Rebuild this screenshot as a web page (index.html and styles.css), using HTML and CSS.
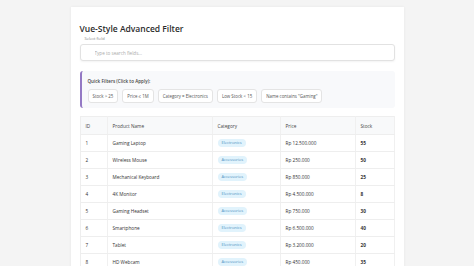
FILE: index.html
```html
<!DOCTYPE html>
<html lang="en">
<head>
<meta charset="UTF-8">
<meta name="viewport" content="width=device-width, initial-scale=1.0">
<title>Vue-Style Advanced Filter</title>
<link rel="stylesheet" href="styles.css">
</head>
<body>
<div class="card">
  <h1>Vue-Style Advanced Filter</h1>
  <label class="field-label">Select field</label>
  <div class="search-box">
    <input type="text" placeholder="Type to search fields...">
  </div>

  <div class="quick-filters">
    <div class="quick-title">Quick Filters (Click to Apply):</div>
    <div class="quick-buttons">
      <button class="chip">Stock &gt; 25</button>
      <button class="chip">Price ≤ 1M</button>
      <button class="chip">Category = Electronics</button>
      <button class="chip">Low Stock &lt; 15</button>
      <button class="chip">Name contains "Gaming"</button>
    </div>
  </div>

  <table class="products">
    <thead>
      <tr>
        <th class="col-id">ID</th>
        <th class="col-name">Product Name</th>
        <th class="col-cat">Category</th>
        <th class="col-price">Price</th>
        <th class="col-stock">Stock</th>
      </tr>
    </thead>
    <tbody>
      <tr><td>1</td><td>Gaming Laptop</td><td><span class="badge">Electronics</span></td><td>Rp 12.500.000</td><td class="stock">55</td></tr>
      <tr><td>2</td><td>Wireless Mouse</td><td><span class="badge">Accessories</span></td><td>Rp 250.000</td><td class="stock">50</td></tr>
      <tr><td>3</td><td>Mechanical Keyboard</td><td><span class="badge">Accessories</span></td><td>Rp 850.000</td><td class="stock">25</td></tr>
      <tr><td>4</td><td>4K Monitor</td><td><span class="badge">Electronics</span></td><td>Rp 4.500.000</td><td class="stock">8</td></tr>
      <tr><td>5</td><td>Gaming Headset</td><td><span class="badge">Accessories</span></td><td>Rp 750.000</td><td class="stock">30</td></tr>
      <tr><td>6</td><td>Smartphone</td><td><span class="badge">Electronics</span></td><td>Rp 6.500.000</td><td class="stock">40</td></tr>
      <tr><td>7</td><td>Tablet</td><td><span class="badge">Electronics</span></td><td>Rp 3.200.000</td><td class="stock">20</td></tr>
      <tr><td>8</td><td>HD Webcam</td><td><span class="badge">Accessories</span></td><td>Rp 450.000</td><td class="stock">35</td></tr>
    </tbody>
  </table>
</div>
</body>
</html>
```

FILE: styles.css
```css
body {
  font-family: "Open Sans", "Noto Sans", sans-serif;
  margin: 0;
  background-color: #f4f4f4;
  color: #333;
}

.card {
  width: 333px;
  margin: 7px auto 0;
  padding: 15px 9px 20px;
  box-sizing: border-box;
  background-color: #fff;
  box-shadow: 0 0 3px rgba(0, 0, 0, 0.06);
}

h1 {
  font-size: 8.5px;
  font-weight: 600;
  color: #2b2b2b;
  margin: 0;
  line-height: 14px;
}

.field-label {
  display: block;
  font-size: 4px;
  color: #888;
  margin: 0 0 2px 5px;
  line-height: 6px;
}

.search-box input {
  display: block;
  width: 100%;
  height: 17px;
  box-sizing: border-box;
  border: 1px solid #e2e2e2;
  border-radius: 3px;
  padding: 0 0 0 14px;
  font-family: inherit;
  font-size: 4.6px;
  box-shadow: 0 1px 2px rgba(0, 0, 0, 0.05);
}

.search-box input::placeholder {
  color: #aaa;
}

.quick-filters {
  margin-top: 10px;
  background-color: #f8f9fb;
  border-left: 2px solid #9479c4;
  border-radius: 3px;
  padding: 7px 8px 5px 6px;
}

.quick-title {
  font-size: 4.6px;
  font-weight: 600;
  color: #444;
  line-height: 7px;
  margin-bottom: 4px;
}

.quick-buttons {
  display: flex;
  gap: 4px;
}

.chip {
  height: 14px;
  padding: 0 4px;
  font-family: inherit;
  font-size: 4.4px;
  color: #555;
  background-color: #fff;
  border: 1px solid #e4e4e4;
  border-radius: 3px;
  cursor: pointer;
}

.products {
  margin-top: 8px;
  width: 100%;
  border-collapse: collapse;
  font-size: 4.7px;
  border: 1px solid #eeeeee;
}

.products th,
.products td {
  text-align: left;
  padding: 0 0 0 5px;
  border-bottom: 1px solid #eeeeee;
  border-right: 1px solid #f0f0f0;
}

.products th {
  height: 17px;
  font-weight: 400;
  color: #444;
  background-color: #f8f9fa;
}

.products td {
  height: 16px;
  color: #333;
}

.col-id { width: 21px; }
.col-name { width: 99px; }
.col-cat { width: 62px; }
.col-price { width: 69px; }

.stock {
  font-weight: 700;
  color: #222;
}

.badge {
  display: inline-block;
  font-size: 4px;
  line-height: 8px;
  padding: 0 4px;
  border-radius: 4px;
  background-color: #e1f3fc;
  color: #4a8fbf;
}
```
